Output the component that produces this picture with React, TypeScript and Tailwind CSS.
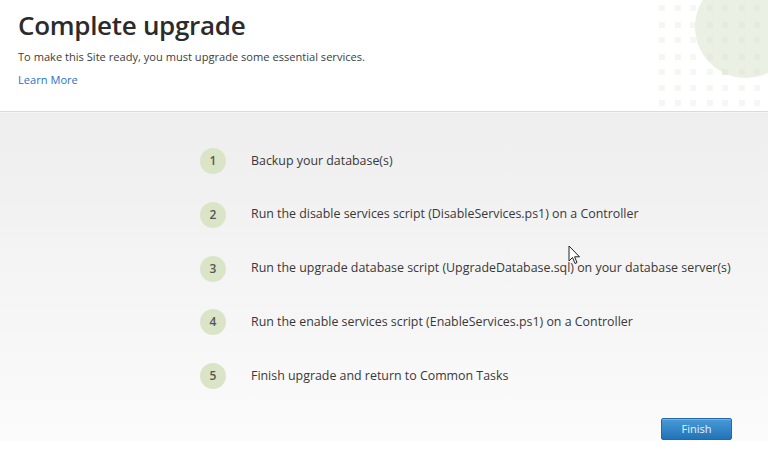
import React from 'react'

const steps = [
  'Backup your database(s)',
  'Run the disable services script (DisableServices.ps1) on a Controller',
  'Run the upgrade database script (UpgradeDatabase.sql) on your database server(s)',
  'Run the enable services script (EnableServices.ps1) on a Controller',
  'Finish upgrade and return to Common Tasks',
]

const font = { fontFamily: '"Open Sans", "Noto Sans", Arial, sans-serif' }

const DotGrid = () => {
  const cols = [662, 678, 693, 710, 725, 742, 757]
  const rows = [8, 25, 40, 57, 72, 88, 103]
  return (
    <svg className="absolute left-0 top-0 pointer-events-none" width="768" height="112">
      {rows.map(y =>
        cols.map(x => (
          <rect key={`${x}-${y}`} x={x - 3} y={y - 3} width="6" height="6" fill="#f5f7f3" />
        ))
      )}
      <circle cx="746" cy="27" r="51" fill="#ebf0e4" />
      {rows.map(y =>
        cols.map(x =>
          (x - 746) ** 2 + (y - 27) ** 2 < 2500 ? (
            <rect key={`c${x}-${y}`} x={x - 3} y={y - 3} width="6" height="6" fill="#e5ecdd" />
          ) : null
        )
      )}
    </svg>
  )
}

const Cursor = () => (
  <svg className="absolute left-[568px] top-[245px] pointer-events-none" width="14" height="20" viewBox="0 0 14 20">
    <path d="M1 1 L1 16 L4.5 12.5 L7 18.5 L9 17.6 L6.6 11.8 L11.5 11.8 Z" fill="#ffffff" stroke="#222" strokeWidth="1" strokeLinejoin="round" />
  </svg>
)

export default function App() {
  return (
    <div className="relative w-[768px] h-[459px] bg-white overflow-hidden" style={font}>
      {/* Header */}
      <div className="relative h-[112px] bg-white border-b border-[#dadada] px-[18px] pt-[6px]">
        <DotGrid />
        <h1 className="relative text-[26px] leading-[38px] font-semibold text-[#2b2b2b] tracking-[-0.3px]">
          Complete upgrade
        </h1>
        <p className="relative mt-[5px] text-[11.1px] leading-[16px] text-[#3c3c3c]">
          To make this Site ready, you must upgrade some essential services.
        </p>
        <a className="relative block mt-[7px] text-[11.1px] leading-[16px] text-[#2a72c6] cursor-pointer">
          Learn More
        </a>
      </div>

      {/* Body */}
      <div className="h-[329px] bg-gradient-to-b from-[#eeeeee] to-[#fbfbfb] border-t border-[#f4f4f4] flex flex-col">
        <div className="flex flex-col gap-[27.75px] pl-[200px] pt-[35px]">
          {steps.map((s, i) => (
            <div key={i} className="flex items-center h-[26px]">
              <div className="w-[26px] h-[26px] rounded-full bg-[#dae5c8] flex items-center justify-center text-[12px] font-semibold text-[#555]">
                {i + 1}
              </div>
              <span className="ml-[25px] text-[12.4px] text-[#383838]">{s}</span>
            </div>
          ))}
        </div>
        <div className="flex justify-end mt-auto pr-[36px] pb-[1px]">
          <button className="w-[71px] h-[22px] rounded-[2px] border border-[#2468a8] bg-gradient-to-b from-[#4a9ad8] to-[#1f73b7] text-[11px] text-[#e8f2fb] shadow-[inset_0_1px_0_rgba(255,255,255,0.25)]">
            Finish
          </button>
        </div>
      </div>
      <Cursor />
    </div>
  )
}
